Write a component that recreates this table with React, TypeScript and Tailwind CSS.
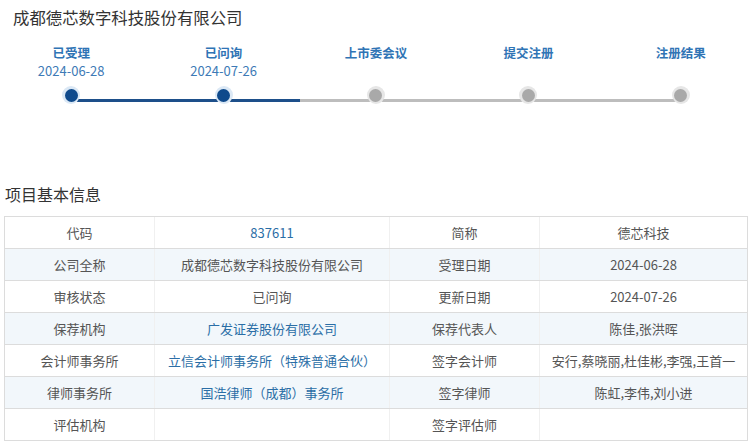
const steps = [
  { label: "已受理", date: "2024-06-28", done: true },
  { label: "已问询", date: "2024-07-26", done: true },
  { label: "上市委会议", date: "", done: false },
  { label: "提交注册", date: "", done: false },
  { label: "注册结果", date: "", done: false },
]

type Cell = { text: string; link?: boolean }

const rows: [Cell, Cell, Cell, Cell][] = [
  [{ text: "代码" }, { text: "837611", link: true }, { text: "简称" }, { text: "德芯科技" }],
  [{ text: "公司全称" }, { text: "成都德芯数字科技股份有限公司" }, { text: "受理日期" }, { text: "2024-06-28" }],
  [{ text: "审核状态" }, { text: "已问询" }, { text: "更新日期" }, { text: "2024-07-26" }],
  [{ text: "保荐机构" }, { text: "广发证券股份有限公司", link: true }, { text: "保荐代表人" }, { text: "陈佳,张洪晖" }],
  [{ text: "会计师事务所" }, { text: "立信会计师事务所（特殊普通合伙）", link: true }, { text: "签字会计师" }, { text: "安行,蔡晓丽,杜佳彬,李强,王首一" }],
  [{ text: "律师事务所" }, { text: "国浩律师（成都）事务所", link: true }, { text: "签字律师" }, { text: "陈虹,李伟,刘小进" }],
  [{ text: "评估机构" }, { text: "" }, { text: "签字评估师" }, { text: "" }],
]

const widths = ["w-[150px]", "w-[235px]", "w-[150px]", "flex-1"]

export default function App() {
  return (
    <div className="w-[750px] h-[445px] bg-white overflow-hidden font-['Noto_Sans_CJK_SC',sans-serif] text-[#333]">
      {/* Title */}
      <h1 className="pl-[13px] pt-[6px] text-[16.4px] leading-[22px] text-[#333]">成都德芯数字科技股份有限公司</h1>

      {/* Progress */}
      <div className="relative mt-[15px] h-[76px]">
        <div className="absolute left-[71px] w-[610px] top-[56px] h-[3px] bg-[#bdbdbd]" />
        <div className="absolute left-[71px] w-[229px] top-[56px] h-[3px] bg-[#1d4f8a]" />
        <div className="relative -ml-[5px] w-[762px] grid grid-cols-5">
          {steps.map((s) => (
            <div key={s.label} className="flex flex-col items-center">
              <div className="text-[12.5px] leading-[19px] font-bold text-[#2f74b5]">{s.label}</div>
              <div className="text-[13px] leading-[18px] text-[#3d7ab6] h-[18px]">{s.date}</div>
              <div
                className={
                  s.done
                    ? "mt-[6px] w-[18px] h-[18px] rounded-full bg-[#dbe8f5] flex items-center justify-center"
                    : "mt-[6px] w-[18px] h-[18px] rounded-full bg-[#e6e6e6] flex items-center justify-center"
                }
              >
                <div className={s.done ? "w-[13px] h-[13px] rounded-full bg-[#0f4a8c]" : "w-[13px] h-[13px] rounded-full bg-[#a9a9a9]"} />
              </div>
            </div>
          ))}
        </div>
      </div>

      {/* Basic info */}
      <h2 className="mt-[64px] pl-[5px] text-[16px] leading-[22px] text-[#333]">项目基本信息</h2>
      <div className="mt-[11px] ml-[4px] w-[744px] border border-[#dcdcdc]">
        {rows.map((r, i) => (
          <div
            key={i}
            className={
              (i % 2 === 1 ? "bg-[#f2f7fb] " : "bg-white ") +
              (i < rows.length - 1 ? "border-b border-[#dcdcdc] h-[32px] " : "h-[31px] ") +
              "flex"
            }
          >
            {r.map((c, j) => (
              <div
                key={j}
                className={
                  widths[j] +
                  (j < 3 ? " border-r border-[#f0f0f0]" : "") +
                  " flex items-center justify-center text-[13px] " +
                  (c.link ? "text-[#2b6ea6]" : "text-[#555]")
                }
              >
                {c.text}
              </div>
            ))}
          </div>
        ))}
      </div>
    </div>
  )
}
